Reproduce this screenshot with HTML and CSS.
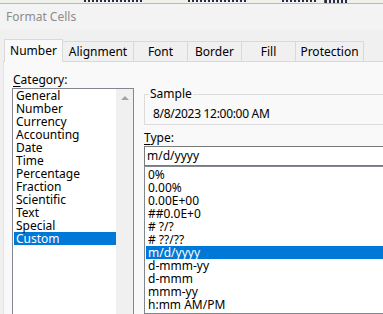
FILE: index.html
```html
<!DOCTYPE html>
<html lang="en">
<head>
    <meta charset="UTF-8">
    <meta name="viewport" content="width=device-width, initial-scale=1.0">
    <title>Format Cells</title>
    <link rel="stylesheet" href="styles.css">
</head>
<body>
    <!-- Sheet behind the dialog, only the bottom edge of its cells shows -->
    <div class="sheet-strip">
        <span class="mark m1"></span>
        <span class="mark m2"></span>
        <span class="mark m3"></span>
        <span class="mark m4"></span>
    </div>

    <div class="titlebar">Format Cells</div>

    <div class="tabs">
        <div class="tab active">Number</div>
        <div class="tab w-align">Alignment</div>
        <div class="tab">Font</div>
        <div class="tab">Border</div>
        <div class="tab">Fill</div>
        <div class="tab last">Protection</div>
    </div>

    <div class="pane">
        <div class="col-left">
            <div class="label"><u>C</u>ategory:</div>
            <div class="listbox">
                <div class="items">
                    <div class="item">General</div>
                    <div class="item">Number</div>
                    <div class="item">Currency</div>
                    <div class="item">Accounting</div>
                    <div class="item">Date</div>
                    <div class="item">Time</div>
                    <div class="item">Percentage</div>
                    <div class="item">Fraction</div>
                    <div class="item">Scientific</div>
                    <div class="item">Text</div>
                    <div class="item">Special</div>
                    <div class="item selected">Custom</div>
                </div>
                <div class="scrollbar">
                    <div class="arrow-up"></div>
                </div>
            </div>
        </div>

        <div class="col-right">
            <fieldset class="sample">
                <legend>Sample</legend>
                <div class="sample-text">8/8/2023 12:00:00 AM</div>
            </fieldset>

            <div class="label type-label"><u>T</u>ype:</div>
            <div class="type-input">m/d/yyyy</div>
            <div class="type-list">
                <div class="item">0%</div>
                <div class="item">0.00%</div>
                <div class="item">0.00E+00</div>
                <div class="item">##0.0E+0</div>
                <div class="item"># ?/?</div>
                <div class="item"># ??/??</div>
                <div class="item selected">m/d/yyyy</div>
                <div class="item">d-mmm-yy</div>
                <div class="item">d-mmm</div>
                <div class="item">mmm-yy</div>
                <div class="item">h:mm AM/PM</div>
            </div>
        </div>
    </div>
</body>
</html>
```

FILE: styles.css
```css
body {
    margin: 0;
    width: 383px;
    height: 314px;
    overflow: hidden;
    background: #f0f0f0;
    font-family: "Noto Sans", "Open Sans", Arial, sans-serif;
    font-size: 12px;
    color: #000;
}

/* strip of the worksheet showing above the dialog */
.sheet-strip {
    height: 3px;
    overflow: hidden;
    background: #eef0ea;
    border-bottom: 1px solid #b9bcb4;
    display: flex;
    align-items: flex-start;
}

.mark {
    height: 2px;
    background: repeating-linear-gradient(90deg, #2a2a4a 0 2px, transparent 2px 4px);
}

.m1 { margin-left: 84px; width: 58px; }
.m2 { margin-left: 46px; width: 58px; }
.m3 { margin-left: 36px; width: 34px; }
.m4 { margin-left: 8px; width: 22px; border-left: 1px solid #555; height: 3px; }

.titlebar {
    height: 26px;
    line-height: 26px;
    padding-left: 6px;
    color: #8c8c8c;
    background: #f3f3f3;
}

/* tab strip */
.tabs {
    display: flex;
    align-items: flex-end;
    padding-left: 4px;
    margin-top: 9px;
}

.tab {
    box-sizing: border-box;
    width: 54px;
    height: 20px;
    line-height: 19px;
    text-align: center;
    border: 1px solid #d9d9d9;
    border-right: none;
    border-bottom: none;
    background: #f0f0f0;
}

.tab.active {
    width: 59px;
    height: 23px;
    line-height: 22px;
    margin-bottom: -1px;
    background: #f9f9f9;
    border-right: 1px solid #d9d9d9;
    position: relative;
    z-index: 1;
}

.tab.w-align {
    width: 70px;
    border-left: none;
}

.tab.last {
    width: 69px;
    border-right: 1px solid #d9d9d9;
}

.pane {
    display: flex;
    gap: 10px;
    margin-left: 3px;
    height: 260px;
    padding: 10px 0 0 8px;
    background: #f9f9f9;
    border-top: 1px solid #d9d9d9;
    border-left: 1px solid #e3e3e3;
}

.label {
    height: 16px;
    line-height: 16px;
    padding-left: 1px;
}

.label u {
    text-underline-offset: 2px;
}

/* category list */
.listbox {
    box-sizing: border-box;
    width: 122px;
    height: 240px;
    border: 1px solid #828790;
    background: #fff;
    display: flex;
}

.items {
    width: 102px;
    padding-left: 1px;
}

.item {
    height: 13px;
    line-height: 13px;
    padding-left: 2px;
    white-space: nowrap;
}

.item.selected {
    background: #0078d7;
    color: #fff;
}

.scrollbar {
    width: 17px;
    margin-left: auto;
    background: #f0f0f0;
    display: flex;
    justify-content: center;
}

.arrow-up {
    width: 0;
    height: 0;
    margin-top: 7px;
    border-left: 4px solid transparent;
    border-right: 4px solid transparent;
    border-bottom: 4px solid #a3a3a3;
}

/* right side, runs on past the window edge */
.col-right {
    width: 240px;
    flex-shrink: 0;
}

.sample {
    margin: 15px 0 0 0;
    padding: 0 0 3px 0;
    border: 1px solid #dcdcdc;
    border-right: none;
}

.sample legend {
    margin-left: 4px;
    padding: 0 1px;
    line-height: 14px;
}

.sample-text {
    padding-left: 8px;
    line-height: 14px;
    margin-top: 6px;
    letter-spacing: -0.3px;
}

.type-label {
    margin-top: 6px;
    height: 15px;
    line-height: 14px;
    padding-left: 0;
}

.type-input {
    box-sizing: border-box;
    height: 20px;
    line-height: 18px;
    padding-left: 2px;
    border: 1px solid #7a7a7a;
    border-right: none;
    background: #fff;
}

.type-list {
    box-sizing: border-box;
    height: 148px;
    padding: 1px 0 0 1px;
    border: 1px solid #828790;
    border-right: none;
    background: #fff;
}
```
